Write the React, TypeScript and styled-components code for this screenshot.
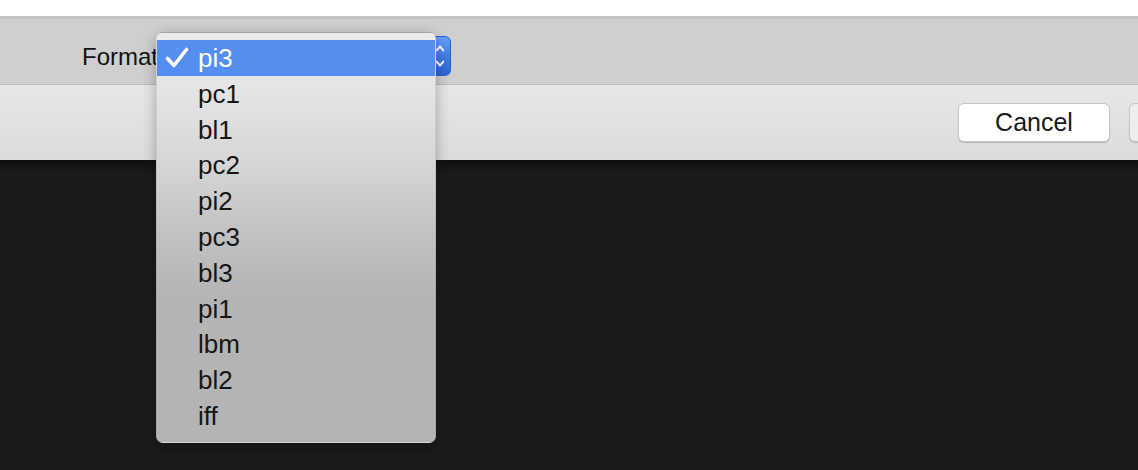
import React from "react";
import styled, { createGlobalStyle } from "styled-components";

const formats = ["pi3", "pc1", "bl1", "pc2", "pi2", "pc3", "bl3", "pi1", "lbm", "bl2", "iff"];

const GlobalStyle = createGlobalStyle`
  html, body {
    margin: 0;
    padding: 0;
    width: 100%;
    height: 100%;
    overflow: hidden;
  }
  #root {
    height: 100%;
  }
`;

const App = () => {
  const selected = "pi3";

  return (
    <Window>
      <GlobalStyle />
      <TopStrip />
      <Toolbar>
        <Label>Format</Label>
        <PopupButton>
          <svg width="10" height="26" viewBox="0 0 10 26">
            <path d="M2 8 L6 3.5 L10 8" fill="none" stroke="#fff" strokeWidth="2" />
            <path d="M2 18 L6 22.5 L10 18" fill="none" stroke="#fff" strokeWidth="2" />
          </svg>
        </PopupButton>
      </Toolbar>
      <ButtonBar>
        <Button>Cancel</Button>
        <Button $disabled />
      </ButtonBar>
      <Canvas />

      <Menu>
        {formats.map((f) => (
          <MenuItem key={f} $active={f === selected}>
            {f === selected && (
              <Check width="24" height="22" viewBox="0 0 24 22">
                <path
                  d="M2.5 11.5 L9 18.5 L21.5 2.5"
                  fill="none"
                  stroke="#fff"
                  strokeWidth="3.6"
                  strokeLinecap="round"
                  strokeLinejoin="round"
                />
              </Check>
            )}
            {f}
          </MenuItem>
        ))}
      </Menu>
    </Window>
  );
};

export default App;

const Window = styled.div`
  position: relative;
  width: 100vw;
  height: 100vh;
  display: flex;
  flex-direction: column;
  background: #1b1b1b;
  font-family: "Liberation Sans", Arial, sans-serif;
`;

const TopStrip = styled.div`
  height: 16px;
  background: #ffffff;
  flex-shrink: 0;
`;

const Toolbar = styled.div`
  height: 69px;
  flex-shrink: 0;
  box-sizing: border-box;
  border-top: 3px solid #c3c3c3;
  border-bottom: 1px solid #bcbcbc;
  background: #cfcfcf;
  display: flex;
  align-items: flex-start;
  padding: 17px 0 0 82px;
`;

const Label = styled.div`
  font-size: 24px;
  line-height: 42px;
  color: #111;
`;

const PopupButton = styled.div`
  margin-left: 8px;
  width: 285px;
  height: 40px;
  box-sizing: border-box;
  border-radius: 6px;
  background: linear-gradient(#67a1f6, #3e77e4 60%, #2e63da);
  border: 1px solid #2a5fd0;
  display: flex;
  align-items: center;
  justify-content: flex-end;
  padding-right: 6px;
`;

const ButtonBar = styled.div`
  height: 75px;
  flex-shrink: 0;
  background: linear-gradient(#e7e7e7, #dcdcdc);
  display: flex;
  align-items: flex-start;
  justify-content: flex-end;
  gap: 19px;
  padding-top: 18px;
  box-sizing: border-box;
  margin-right: -143px;
`;

const Button = styled.div<{ $disabled?: boolean }>`
  width: 152px;
  height: 39px;
  box-sizing: border-box;
  border-radius: 6px;
  background: ${(p) => (p.$disabled ? "#eeeeee" : "#ffffff")};
  border: 1px solid #c6c6c6;
  box-shadow: 0 1px 1px rgba(0, 0, 0, 0.18);
  font-size: 25px;
  color: #1a1a1a;
  display: flex;
  align-items: center;
  justify-content: center;
`;

const Canvas = styled.div`
  flex: 1;
  background: linear-gradient(#0f0f0f, #1b1b1b 12px);
`;

const Menu = styled.div`
  position: absolute;
  left: 156px;
  top: 32px;
  width: 280px;
  height: 411px;
  box-sizing: border-box;
  padding-top: 7px;
  border-radius: 7px;
  border: 1px solid rgba(0, 0, 0, 0.08);
  background: linear-gradient(
    #ececec 0px,
    #e4e4e4 60px,
    #d6d6d6 130px,
    #c2c2c2 200px,
    #b5b5b5 260px,
    #b4b4b4 100%
  );
  box-shadow: 0 4px 14px rgba(0, 0, 0, 0.3);
  overflow: hidden;
`;

const MenuItem = styled.div<{ $active?: boolean }>`
  position: relative;
  height: 35.8px;
  line-height: 37px;
  padding-left: 41px;
  font-size: 26px;
  color: ${(p) => (p.$active ? "#ffffff" : "#161616")};
  background: ${(p) => (p.$active ? "#548ff0" : "transparent")};
`;

const Check = styled.svg`
  position: absolute;
  left: 8px;
  top: 7px;
`;
